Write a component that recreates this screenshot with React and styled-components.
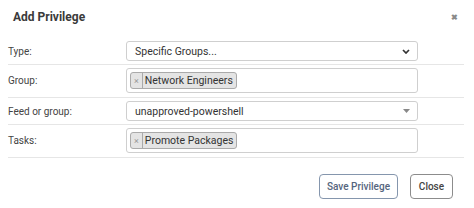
import React from "react";
import styled, { createGlobalStyle } from "styled-components";

const GlobalStyle = createGlobalStyle`
  body {
    margin: 0;
    background: #ffffff;
    font-family: Roboto, "Liberation Sans", Arial, sans-serif;
    color: #333;
  }
`;

const SModal = styled.div`
  width: 474px;
  height: 208px;
  box-sizing: border-box;
  background: #fff;
  display: flex;
  flex-direction: column;
`;

const SHeader = styled.div`
  height: 38px;
  display: flex;
  align-items: center;
  justify-content: space-between;
  padding: 0 16px 0 13px;
  box-sizing: border-box;
`;

const STitle = styled.h4`
  margin: 0;
  margin-top: -4px;
  font-size: 12px;
  font-weight: 700;
  color: #3a3a3a;
`;

const SCloseX = styled.span`
  font-size: 8px;
  font-weight: 700;
  color: #8a8a8a;
  margin-top: -4px;
`;

const SForm = styled.div`
  padding: 0 10px 0 8px;
  display: flex;
  flex-direction: column;
`;

const SRow = styled.div`
  display: grid;
  grid-template-columns: 118px 292px;
  align-items: center;
  padding: ${(p) => (p.tall ? "3px 0 4px" : "3px 0 3px")};
  border-bottom: 1px solid #e6e6e6;
`;

const SLabel = styled.label`
  font-size: 10px;
  color: #444;
`;

const SBox = styled.div`
  height: ${(p) => (p.tall ? "25px" : "20px")};
  box-sizing: border-box;
  border: 1px solid #cfcfcf;
  border-radius: 3px;
  background: #fff;
  display: flex;
  align-items: center;
  justify-content: space-between;
  padding: 0 7px 0 ${(p) => (p.tall ? "3px" : "8px")};
  font-size: 10.5px;
  color: #333;
`;

const SChip = styled.span`
  display: inline-flex;
  align-items: stretch;
  height: 17px;
  box-sizing: border-box;
  border: 1px solid #aaa;
  border-radius: 3px;
  background: #e4e4e4;
  font-size: 10.5px;
  color: #333;
`;

const SChipX = styled.span`
  display: flex;
  align-items: center;
  padding: 0 3px;
  font-size: 9px;
  color: #999;
  border-right: 1px solid #aaa;
`;

const SChipText = styled.span`
  display: flex;
  align-items: center;
  padding: 0 3px 0 2px;
`;

const SFooter = styled.div`
  flex: 1;
  display: flex;
  justify-content: flex-end;
  align-items: flex-start;
  gap: 12px;
  padding: 16px 21px 0 0;
`;

const SButton = styled.button`
  height: 25px;
  width: ${(p) => p.w}px;
  box-sizing: border-box;
  border: 1px solid ${(p) => (p.primary ? "#8596ad" : "#8c8c8c")};
  border-radius: 4px;
  background: #fff;
  font-family: Roboto, "Liberation Sans", Arial, sans-serif;
  font-size: 10px;
  font-weight: 500;
  color: ${(p) => (p.primary ? "#55657e" : "#444")};
  padding: 0;
`;

const Chevron = () => (
  <svg width="8" height="5" viewBox="0 0 8 5">
    <path d="M1 1 L4 4 L7 1" fill="none" stroke="#333" strokeWidth="1.7" />
  </svg>
);

const Caret = () => (
  <svg width="7" height="4" viewBox="0 0 7 4">
    <path d="M0 0 L7 0 L3.5 4 Z" fill="#888" />
  </svg>
);

const Chip = ({ children }) => (
  <SChip>
    <SChipX>×</SChipX>
    <SChipText>{children}</SChipText>
  </SChip>
);

export default function App() {
  return (
    <SModal>
      <GlobalStyle />
      <SHeader>
        <STitle>Add Privilege</STitle>
        <SCloseX>✖</SCloseX>
      </SHeader>
      <SForm>
        <SRow>
          <SLabel>Type:</SLabel>
          <SBox>
            <span>Specific Groups...</span>
            <Chevron />
          </SBox>
        </SRow>
        <SRow tall>
          <SLabel>Group:</SLabel>
          <SBox tall>
            <Chip>Network Engineers</Chip>
          </SBox>
        </SRow>
        <SRow>
          <SLabel>Feed or group:</SLabel>
          <SBox>
            <span>unapproved-powershell</span>
            <Caret />
          </SBox>
        </SRow>
        <SRow tall>
          <SLabel>Tasks:</SLabel>
          <SBox tall>
            <Chip>Promote Packages</Chip>
          </SBox>
        </SRow>
      </SForm>
      <SFooter>
        <SButton primary w={79}>Save Privilege</SButton>
        <SButton w={43}>Close</SButton>
      </SFooter>
    </SModal>
  );
}
